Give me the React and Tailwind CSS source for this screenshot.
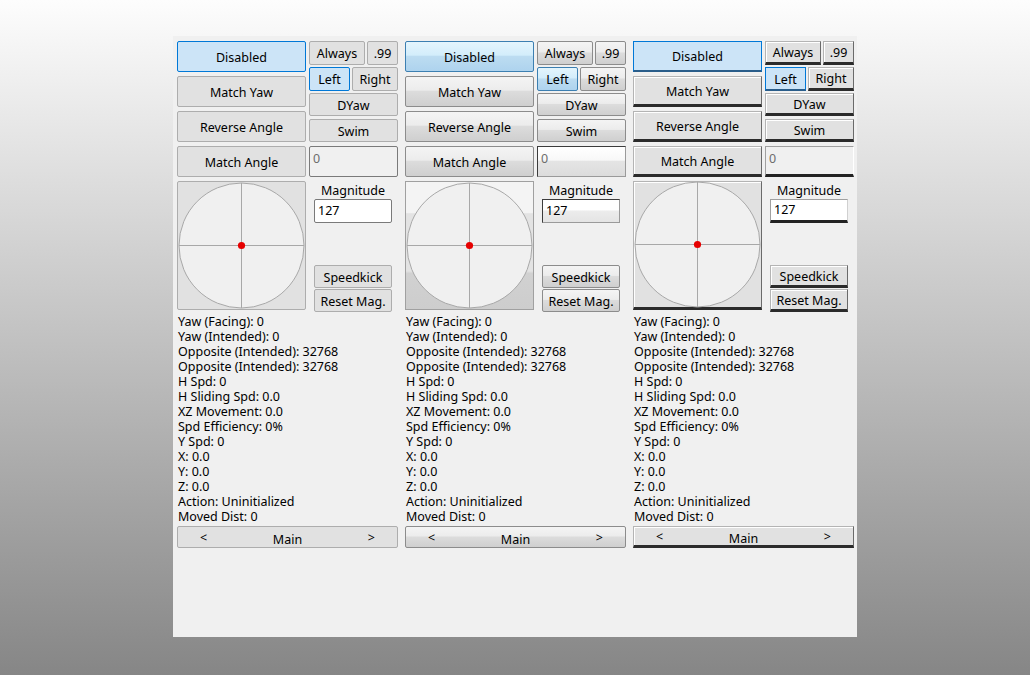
import React from "react";

const themes = {
  flat: {
    btn: "border border-[#adadad] bg-[#e1e1e1] rounded-[2px]",
    active: "border border-[#0078d7] bg-[#cce4f7] rounded-[2px]",
    box: "border border-[#7a7a7a] bg-[#f0f0f0] rounded-[2px]",
    input: "border border-[#7a7a7a] bg-white rounded-[2px]",
    pad: "border border-[#adadad] bg-[#e1e1e1] rounded-[2px]",
  },
  aero: {
    btn: "border border-[#8c8c8c] bg-[linear-gradient(#f4f4f4_0%,#ececec_45%,#dcdcdc_50%,#cfcfcf_100%)] rounded-[2px]",
    active:
      "border border-[#3c7fb1] bg-[linear-gradient(#e4f5fd_0%,#d3edfb_45%,#bcdcf1_50%,#aed3ee_100%)] rounded-[2px]",
    box: "border border-[#9a9a9a] border-t-[#3c3c3c] border-l-[#3c3c3c] bg-[linear-gradient(#ffffff_0%,#f8f8f8_45%,#e4e4e4_50%,#dcdcdc_100%)]",
    input:
      "border border-[#9a9a9a] border-t-[#3c3c3c] border-l-[#3c3c3c] bg-[linear-gradient(#ffffff_0%,#ffffff_45%,#ececec_50%,#e4e4e4_100%)]",
    pad: "border border-[#a0a0a0] bg-[linear-gradient(#f4f4f4_0%,#f4f4f4_24%,#e3e3e3_25%,#e3e3e3_70%,#d1d1d1_72%,#cdcdcd_100%)]",
  },
  classic: {
    btn: "border border-[#b4b4b4] border-r-[#6a6a6a] border-b-[3px] border-b-[#2b2b2b] bg-[#e1e1e1] shadow-[inset_1px_1px_0_#ffffff]",
    active: "border border-[#0078d7] border-b-2 border-b-[#2a5d8a] bg-[#cce4f7]",
    box: "border border-[#a0a0a0] border-r-white border-b-[3px] border-b-[#222222] bg-[#f0f0f0]",
    input: "border border-[#a0a0a0] border-r-[#d0d0d0] border-b-[3px] border-b-[#222222] bg-white",
    pad: "border border-[#b4b4b4] border-r-[#6a6a6a] border-b-[3px] border-b-[#2b2b2b] bg-[#e1e1e1] shadow-[inset_1px_1px_0_#ffffff]",
  },
};

const Btn = ({ t, active, className, children }) => (
  <div
    className={`flex items-center justify-center pt-[3px] text-black ${
      active ? t.active : t.btn
    } ${className}`}
  >
    {children}
  </div>
);

const Stick = ({ t }) => (
  <div className={`w-[129px] h-[129px] flex items-center justify-center ${t.pad}`}>
    <svg width="127" height="127" viewBox="0 0 127 127">
      <circle cx="63.5" cy="63.5" r="62.5" fill="#f0f0f0" stroke="#a8a8a8" strokeWidth="1" />
      <line x1="1" y1="63.5" x2="126" y2="63.5" stroke="#a8a8a8" strokeWidth="1" />
      <line x1="63.5" y1="1" x2="63.5" y2="126" stroke="#a8a8a8" strokeWidth="1" />
      <circle cx="63.5" cy="63.5" r="3.6" fill="#e60000" />
    </svg>
  </div>
);

const stats = [
  "Yaw (Facing): 0",
  "Yaw (Intended): 0",
  "Opposite (Intended): 32768",
  "Opposite (Intended): 32768",
  "H Spd: 0",
  "H Sliding Spd: 0.0",
  "XZ Movement: 0.0",
  "Spd Efficiency: 0%",
  "Y Spd: 0",
  "X: 0.0",
  "Y: 0.0",
  "Z: 0.0",
  "Action: Uninitialized",
  "Moved Dist: 0",
];

const Column = ({ variant }) => {
  const t = themes[variant];
  return (
    <div className="w-[221px] flex flex-col">
      <div className="flex items-start gap-[3px]">
        <div className="w-[129px] flex flex-col gap-[4px]">
          <Btn t={t} active className="h-[31px]">Disabled</Btn>
          <Btn t={t} className="h-[31px]">Match Yaw</Btn>
          <Btn t={t} className="h-[31px]">Reverse Angle</Btn>
          <Btn t={t} className="h-[31px]">Match Angle</Btn>
          <Stick t={t} />
        </div>
        <div className="w-[89px] flex flex-col">
          <div className="flex gap-[2px] h-[24px]">
            <Btn t={t} className="w-[56px]">Always</Btn>
            <Btn t={t} className="flex-1">.99</Btn>
          </div>
          <div className="flex gap-[2px] h-[24px] mt-[2px]">
            <Btn t={t} active className="w-[41px]">Left</Btn>
            <Btn t={t} className="flex-1">Right</Btn>
          </div>
          <Btn t={t} className="h-[23px] mt-[2px]">DYaw</Btn>
          <Btn t={t} className="h-[23px] mt-[3px]">Swim</Btn>
          <div className={`h-[31px] mt-[4px] px-[3px] pt-[4px] leading-[15px] text-[#6d6d6d] ${t.box}`}>0</div>
          <div className="pl-[5px] pr-[6px] flex flex-col">
            <div className="mt-[5px] h-[17px] leading-[17px] text-center">Magnitude</div>
            <div className={`h-[24px] flex items-center px-[3px] text-black ${t.input}`}>127</div>
            <Btn t={t} className="h-[23px] mt-[42px]">Speedkick</Btn>
            <Btn t={t} className="h-[23px] mt-[1px]">Reset Mag.</Btn>
          </div>
        </div>
      </div>
      <div className="mt-[2px] pl-[1px] leading-[15px] text-black">
        {stats.map((s, i) => (
          <div key={i}>{s}</div>
        ))}
      </div>
      <Btn t={t} className="h-[22px] mt-[2px] !justify-between px-[22px]">
        <span className="-mt-[1px]">&lt;</span>
        <span className="pt-[3px]">Main</span>
        <span className="-mt-[1px]">&gt;</span>
      </Btn>
    </div>
  );
};

export default function App() {
  return (
    <div className="w-[1030px] h-[675px] bg-[linear-gradient(#fdfdfd,#868686)] pt-[36px] font-['Noto_Sans',sans-serif] text-[12.5px]">
      <div className="mx-auto w-[684px] h-[601px] bg-[#f0f0f0] flex gap-[7px] pt-[5px] pl-[4px]">
        <Column variant="flat" />
        <Column variant="aero" />
        <Column variant="classic" />
      </div>
    </div>
  );
}
